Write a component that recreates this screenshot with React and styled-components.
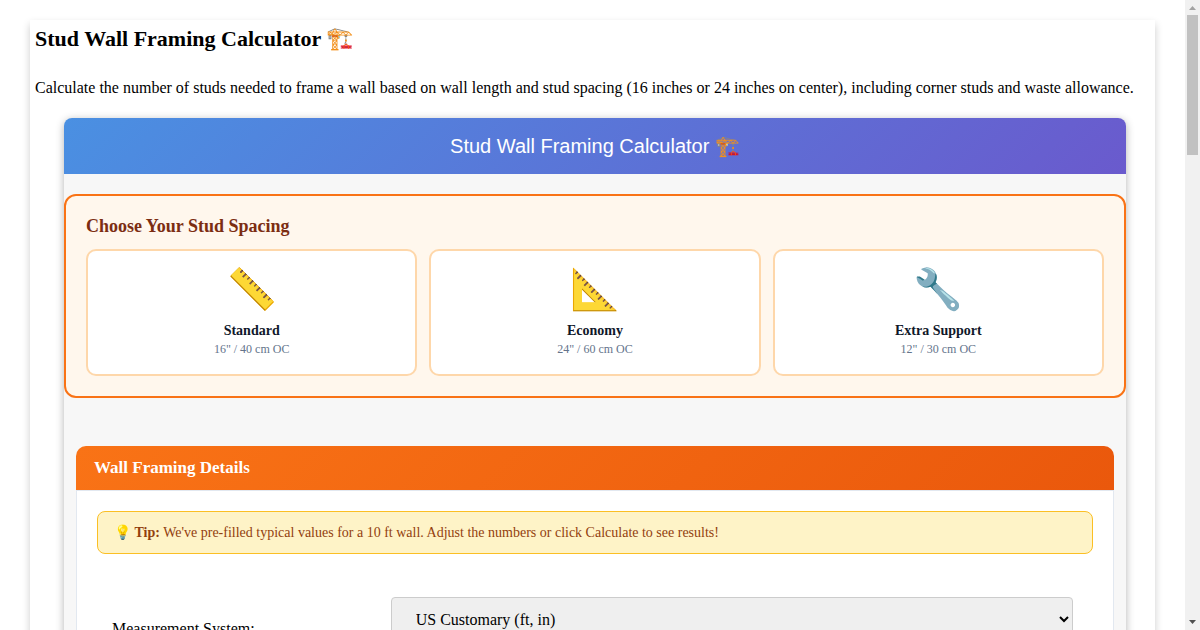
import React, { useState } from 'react';
import styled, { createGlobalStyle } from 'styled-components';

const spacings = [
  { id: 'standard', icon: '📏', name: 'Standard', detail: '16" / 40 cm OC' },
  { id: 'economy', icon: '📐', name: 'Economy', detail: '24" / 60 cm OC' },
  { id: 'extra', icon: '🔧', name: 'Extra Support', detail: '12" / 30 cm OC' },
];

function App() {
  const [system, setSystem] = useState('us');

  return (
    <>
      <GlobalStyle />
      <Shell>
        <Content>
          <Page>
            <PageTitle>Stud Wall Framing Calculator 🏗️</PageTitle>
            <Intro>
              Calculate the number of studs needed to frame a wall based on wall length and stud
              spacing (16 inches or 24 inches on center), including corner studs and waste
              allowance.
            </Intro>
            <Calculator>
              <CalculatorHeader>Stud Wall Framing Calculator 🏗️</CalculatorHeader>
              <SpacingPanel>
                <SpacingTitle>Choose Your Stud Spacing</SpacingTitle>
                <SpacingGrid>
                  {spacings.map(spacing => (
                    <SpacingCard key={spacing.id} type="button">
                      <SpacingIcon>{spacing.icon}</SpacingIcon>
                      <SpacingName>{spacing.name}</SpacingName>
                      <SpacingDetail>{spacing.detail}</SpacingDetail>
                    </SpacingCard>
                  ))}
                </SpacingGrid>
              </SpacingPanel>
              <Details>
                <DetailsHeader>Wall Framing Details</DetailsHeader>
                <DetailsBody>
                  <Tip>
                    💡 <strong>Tip:</strong> We've pre-filled typical values for a 10 ft wall.
                    Adjust the numbers or click Calculate to see results!
                  </Tip>
                  <Field>
                    <Label htmlFor="system">Measurement System:</Label>
                    <Select id="system" value={system} onChange={e => setSystem(e.target.value)}>
                      <option value="us">US Customary (ft, in)</option>
                      <option value="metric">Metric (m, cm)</option>
                    </Select>
                  </Field>
                </DetailsBody>
              </Details>
            </Calculator>
          </Page>
        </Content>
        <ScrollTrack aria-hidden="true">
          <Arrow viewBox="0 0 15 15">
            <path d="M4 10h7L7.5 6z" fill="#a3a3a3" />
          </Arrow>
          <ScrollThumb />
          <Arrow viewBox="0 0 15 15">
            <path d="M4 5h7L7.5 9z" fill="#505050" />
          </Arrow>
        </ScrollTrack>
      </Shell>
    </>
  );
}

const GlobalStyle = createGlobalStyle`
  * {
    box-sizing: border-box;
  }

  body {
    margin: 0;
    background: #fff;
    color: #000;
    font-family: 'Liberation Serif', 'Times New Roman', serif;
    font-size: 16px;
  }
`;

const Shell = styled.div`
  display: flex;
  height: 100vh;
  overflow: hidden;
`;

const Content = styled.main`
  flex: 1;
  min-width: 0;
  padding: 20px 30px;
`;

const Page = styled.div`
  min-height: 100vh;
  padding: 5px;
  background: #fff;
  box-shadow: 0 4px 8px rgba(0, 0, 0, 0.2);
`;

const PageTitle = styled.h1`
  margin: 0;
  font-size: 22px;
  line-height: 28px;
`;

const Intro = styled.p`
  margin: 20px 0 16px;
  line-height: 29px;
`;

const Calculator = styled.section`
  margin: 0 24px 0 29px;
  padding-bottom: 48px;
  background: #f7f7f7;
  border-radius: 8px;
  box-shadow: 0 2px 8px rgba(0, 0, 0, 0.3);
`;

const CalculatorHeader = styled.header`
  padding: 16px;
  background: linear-gradient(135deg, #4a90e2, #6a5acd);
  border-radius: 8px 8px 0 0;
  color: #fff;
  font-family: 'Liberation Sans', Arial, sans-serif;
  font-size: 20px;
  line-height: 24px;
  text-align: center;
`;

const SpacingPanel = styled.section`
  margin: 20px 0 48px;
  padding: 20px;
  background: #fff7ed;
  border: 2px solid #f97316;
  border-radius: 12px;
`;

const SpacingTitle = styled.h2`
  margin: 0 0 12px;
  color: #7c2d12;
  font-size: 18px;
  line-height: 21px;
`;

const SpacingGrid = styled.div`
  display: grid;
  grid-template-columns: repeat(3, 1fr);
  gap: 12px;
`;

const SpacingCard = styled.button`
  display: flex;
  flex-direction: column;
  align-items: center;
  padding: 16px;
  background: #fff;
  border: 2px solid #fed7aa;
  border-radius: 10px;
  font-family: inherit;
  cursor: pointer;
`;

const SpacingIcon = styled.span`
  font-size: 40px;
  line-height: 46px;
`;

const SpacingName = styled.span`
  margin-top: 8px;
  color: #0f172a;
  font-size: 14px;
  font-weight: 700;
  line-height: 20px;
`;

const SpacingDetail = styled.span`
  color: #64748b;
  font-size: 12px;
  line-height: 17px;
`;

const Details = styled.section`
  margin: 0 12px;
`;

const DetailsHeader = styled.h2`
  margin: 0;
  padding: 12px 18px;
  background: linear-gradient(135deg, #f97316, #ea580c);
  border-radius: 10px 10px 0 0;
  color: #fff;
  font-size: 17px;
  line-height: 20px;
`;

const DetailsBody = styled.div`
  padding: 20px;
  background: #fff;
  border: 1px solid #e2e8f0;
`;

const Tip = styled.div`
  padding: 12px 16px;
  background: #fef3c7;
  border: 1px solid #fbbf24;
  border-radius: 8px;
  color: #92400e;
  font-size: 14px;
  line-height: 17px;
`;

const Field = styled.div`
  display: grid;
  grid-template-columns: 29fr 71fr;
  align-items: center;
  margin-top: 43px;
  padding: 0 20px 0 15px;
`;

const Label = styled.label`
  padding-top: 18px;
`;

const Select = styled.select`
  width: 100%;
  height: 45px;
  padding: 0 20px;
  background: #efefef;
  border: 1px solid #ccc;
  border-radius: 4px;
  color: #000;
  font-family: inherit;
  font-size: 16px;
`;

const ScrollTrack = styled.div`
  display: flex;
  flex-direction: column;
  width: 15px;
  background: #f1f1f1;
`;

const Arrow = styled.svg`
  width: 15px;
  height: 15px;

  &:last-child {
    margin-top: auto;
  }
`;

const ScrollThumb = styled.div`
  height: 140px;
  margin: 0 2px;
  background: #c1c1c1;
`;

export default App;
